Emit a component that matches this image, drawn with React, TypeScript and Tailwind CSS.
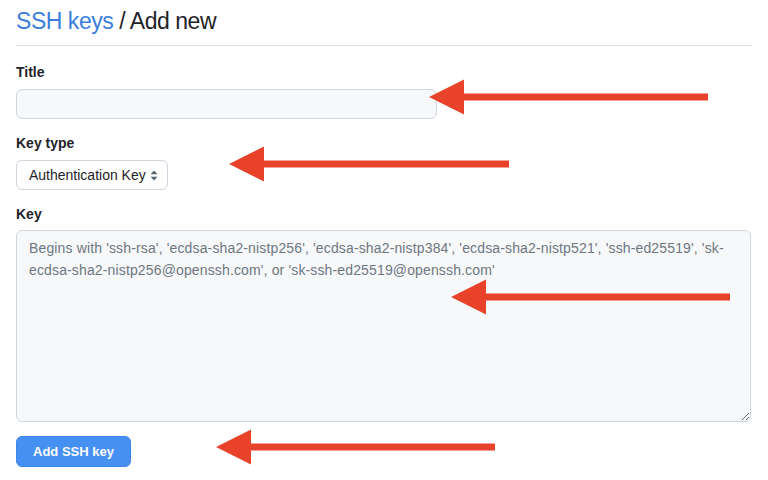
import type { FC } from 'react'

const Arrow: FC<{ tipX: number; y: number; tailX: number }> = ({ tipX, y, tailX }) => {
  const headLen = 35
  const headHalf = 17.5
  return (
    <g fill="#e8432a" stroke="none">
      <polygon
        points={`${tipX},${y} ${tipX + headLen},${y - headHalf} ${tipX + headLen},${y + headHalf}`}
      />
      <rect x={tipX + headLen - 1} y={y - 3.5} width={tailX - tipX - headLen + 1} height={7} />
    </g>
  )
}

const SelectCaret = () => (
  <svg width="8" height="11" viewBox="0 0 8 11" className="text-[#59636e]" aria-hidden>
    <path d="M4 0.5 L7.5 4.2 H0.5 Z" fill="currentColor" />
    <path d="M4 10.5 L7.5 6.8 H0.5 Z" fill="currentColor" />
  </svg>
)

export default function App() {
  return (
    <div
      className="relative h-[480px] w-[768px] overflow-hidden bg-white text-[#1f2328]"
      style={{ fontFamily: '"Liberation Sans", Arial, sans-serif' }}
    >
      <div className="flex flex-col px-4">
        <div className="border-b border-[#d8dee4] pb-[8px] pt-[5px]">
          <h1 className="text-[23px] leading-[32px] tracking-[-0.02em]">
            <span className="text-[#3b7ddd]">SSH keys</span> / Add new
          </h1>
        </div>

        <label className="mt-[16px] text-sm font-bold leading-5">Title</label>
        <input
          type="text"
          className="mt-[7px] h-[30px] w-[421px] rounded-md border border-[#d0d7de] bg-[#f6f8fa] px-3 text-sm outline-none"
        />

        <label className="mt-[14px] text-sm font-bold leading-5">Key type</label>
        <div className="mt-[7px] flex h-[30px] w-[152px] items-center justify-between rounded-md border border-[#d0d7de] bg-white pl-3 pr-[9px] text-sm">
          <span>Authentication Key</span>
          <SelectCaret />
        </div>

        <label className="mt-[14px] text-sm font-bold leading-5">Key</label>
        <textarea
          className="mt-[6px] h-[192px] w-[735px] rounded-md border border-[#d0d7de] bg-[#f6f8fa] px-3 py-[6px] text-sm leading-[22px] tracking-[0.01em] outline-none placeholder:text-[#6e7781]"
          placeholder="Begins with 'ssh-rsa', 'ecdsa-sha2-nistp256', 'ecdsa-sha2-nistp384', 'ecdsa-sha2-nistp521', 'ssh-ed25519', 'sk-ecdsa-sha2-nistp256@openssh.com', or 'sk-ssh-ed25519@openssh.com'"
        />

        <div className="mt-[14px]">
          <button className="h-[31px] rounded-md border border-[#3f86ea] bg-[#4690f3] px-4 text-[13px] font-bold text-white">
            Add SSH key
          </button>
        </div>
      </div>

      <svg
        className="pointer-events-none absolute inset-0"
        width="768"
        height="480"
        viewBox="0 0 768 480"
      >
        <Arrow tipX={429} y={97} tailX={708} />
        <Arrow tipX={229} y={164} tailX={509} />
        <Arrow tipX={451} y={297} tailX={730} />
        <Arrow tipX={216} y={447} tailX={495} />
      </svg>
    </div>
  )
}
